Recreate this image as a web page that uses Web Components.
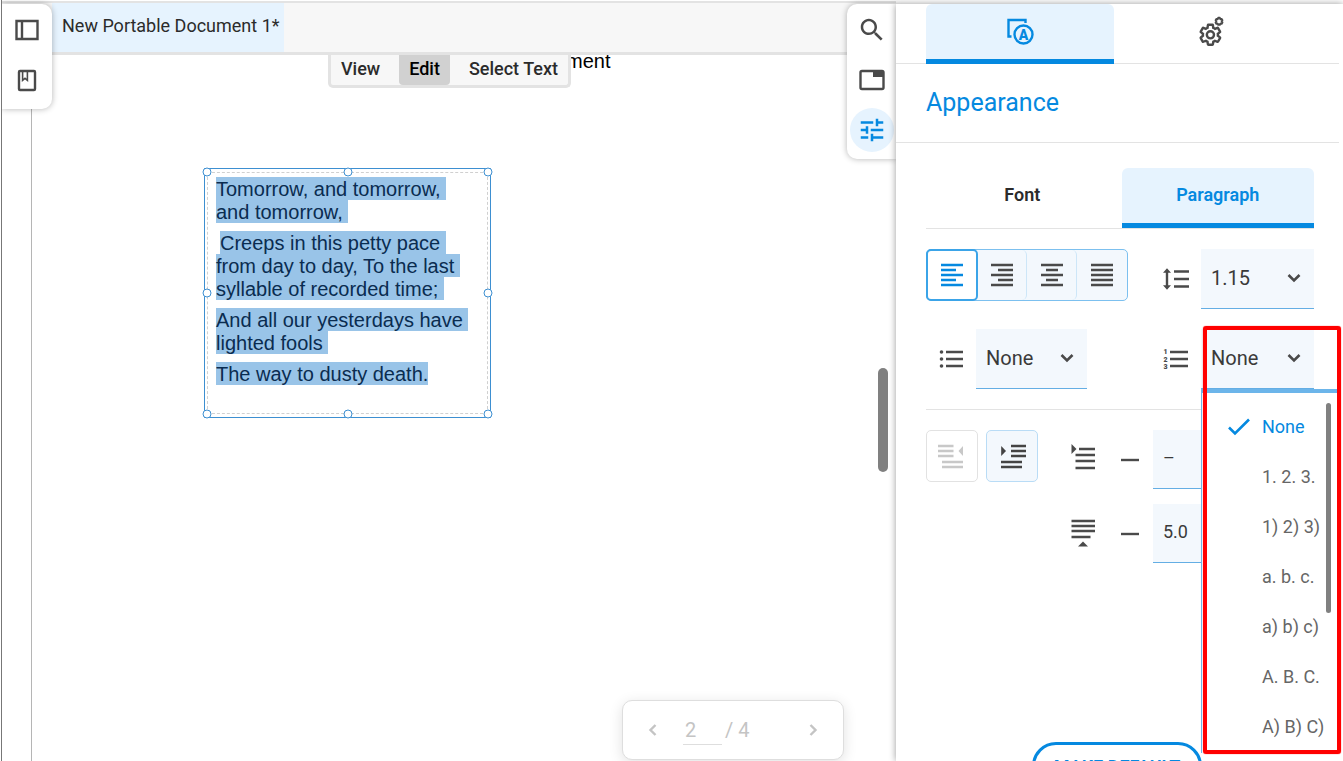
<!DOCTYPE html>
<html lang="en">
<head>
<meta charset="utf-8">
<title>New Portable Document 1*</title>
<style>
    :root {
        --accent: #0589e0;
        --accent-soft: #e6f3fe;
        --field: #f3f8fd;
        --field-line: #64aee4;
        --line: #e3e3e3;
        --ink: #4a4a4a;
    }

    body {
        margin: 0;
        font-family: Roboto, "Liberation Sans", sans-serif;
        font-size: 18px;
        color: #2b2b2b;
        background: #fff;
    }
</style>
</head>
<body>
<pdf-app></pdf-app>

<script>
// Outline shared by the big and the small gear
const GEAR = 'M19.43 12.98c.04-.32.07-.64.07-.98 0-.34-.03-.66-.07-.98l2.11-1.65c.19-.15.24-.42.12-.64l-2-3.46c-.09-.16-.26-.25-.44-.25-.06 0-.12.01-.17.03l-2.49 1c-.52-.4-1.08-.73-1.69-.98l-.38-2.65C14.46 2.18 14.25 2 14 2h-4c-.25 0-.46.18-.49.42l-.38 2.65c-.61.25-1.17.59-1.69.98l-2.49-1c-.06-.02-.12-.03-.18-.03-.17 0-.34.09-.43.25l-2 3.46c-.13.22-.07.49.12.64l2.11 1.65c-.04.32-.07.65-.07.98 0 .33.03.66.07.98l-2.11 1.65c-.19.15-.24.42-.12.64l2 3.46c.09.16.26.25.44.25.06 0 .12-.01.17-.03l2.49-1c.52.4 1.08.73 1.69.98l.38 2.65c.03.24.24.42.49.42h4c.25 0 .46-.18.49-.42l.38-2.65c.61-.25 1.17-.59 1.69-.98l2.49 1c.06.02.12.03.18.03.17 0 .34-.09.43-.25l2-3.46c.12-.22.07-.49-.12-.64l-2.11-1.65z';

// Every icon is drawn on a 28x28 grid
const ICONS = {
    sidebar: '<path d="M3.5 5h21v18h-21zM9 5v18"/>',
    bookmark: '<rect x="6" y="5" width="16" height="19" rx="1"/><path stroke-width="1.6" d="M9.6 5v9.4l2.4-2 2.4 2V5"/>',
    search: '<path class="f" transform="translate(-1 -1) scale(1.25)" d="M15.5 14h-.79l-.28-.27C15.41 12.59 16 11.11 16 9.5 16 5.91 13.09 3 9.5 3S3 5.91 3 9.5 5.91 16 9.5 16c1.61 0 3.09-.59 4.23-1.57l.27.28v.79l5 4.99L20.49 19l-4.99-5zm-6 0C7.01 14 5 11.99 5 9.5S7.01 5 9.5 5 14 7.01 14 9.5 11.99 14 9.5 14z"/>',
    pane: '<rect x="2.5" y="5" width="23" height="18" rx="1.5"/><path class="f" d="M15 4h10v7H15z"/>',
    tune: '<path class="f" transform="translate(-1 -1) scale(1.25)" d="M3 17v2h6v-2H3zM3 5v2h10V5H3zm10 16v-2h8v-2h-8v-2h-2v6h2zM7 9v2H3v2h4v2h2V9H7zm14 4v-2H11v2h10zm-6-4h2V7h4V5h-4V3h-2v6z"/>',
    appearance: '<path d="M19.5 5V2h-17v16.500H5.500"/><circle cx="17.500" cy="16.500" r="9"/><text x="17.500" y="21.500" font-size="14">A</text>',
    gears: `<g transform="translate(.4 4.800)"><path d="${GEAR}"/><circle cx="12" cy="12" r="3.600"/></g><g transform="translate(16.700 -1) scale(.36)"><path stroke-width="5" d="${GEAR}"/></g>`,
    left: '<path d="M3 4h22M3 9h15M3 14h22M3 19h15M3 24h22"/>',
    right: '<path d="M3 4h22M10 9h15M3 14h22M10 19h15M3 24h22"/>',
    center: '<path d="M3 4h22M8 9h12M3 14h22M8 19h12M3 24h22"/>',
    justify: '<path d="M3 4h22M3 9h22M3 14h22M3 19h22M3 24h22"/>',
    leading: '<path d="M12 6.500h15M12 14h15M12 21.500h15M5 6v16"/><path class="f" d="M5 3.200l4 4.600H1zM5 24.800l4-4.600H1z"/>',
    bullets: '<path d="M9 7h17M9 14h17M9 21h17"/><circle class="f" cx="4.500" cy="7" r="1.800"/><circle class="f" cx="4.500" cy="14" r="1.800"/><circle class="f" cx="4.500" cy="21" r="1.800"/>',
    numbers: '<path d="M8 7h18M8 14h18M8 21h18"/><text x="3.500" y="9" font-size="7">1</text><text x="3.500" y="16.500" font-size="7">2</text><text x="3.500" y="24" font-size="7">3</text>',
    outdent: '<path d="M0 4h15.500M0 9h15.500M0 14h15.500M4 20h21M4 25h21"/><path class="f" d="M20.500 9l4.500-5v10z"/>',
    indent: '<path d="M13 4h15M13 9h15M13 14h15M3 20h21M3 25h21"/><path class="f" d="M8 9L3.200 4v10z"/>',
    firstline: '<path d="M10 3h16M6.500 9H26M6.500 15H26M6.500 22H26"/><path class="f" d="M7.500 3L2.500-2V8z"/>',
    after: '<path d="M2.500 1H26M2.500 6H26M2.500 11H26M2.500 17h19"/><path class="f" d="M14 21.500l5 5H9z"/>',
    minus: '<path d="M5 14h18"/>',
    plus: '<path d="M5 14h18M14 5v18"/>',
    down: '<path stroke-width="2.600" d="M8.500 11l5.500 5.500 5.500-5.500"/>',
    prev: '<path stroke-width="2.400" d="M16.500 9l-5 5 5 5"/>',
    next: '<path stroke-width="2.400" d="M11.500 9l5 5-5 5"/>',
    check: '<path stroke-width="2.600" d="M4 15.500l6 6L24 7.500"/>'
};

class UiIcon extends HTMLElement {
    constructor() {
        super();
        this.attachShadow({ mode: 'open' });
    }

    connectedCallback() {
        this.shadowRoot.innerHTML = `
            <style>
                :host { display: block; flex: none; width: 28px; height: 28px; pointer-events: none; }
                svg { display: block; overflow: visible; fill: none; stroke: currentColor; stroke-width: 2.4; }
                .f, text { fill: currentColor; stroke: none; }
                text { font-family: Roboto, sans-serif; font-weight: 900; text-anchor: middle; }
            </style>
            <svg width="28" height="28" viewBox="0 0 28 28" aria-hidden="true">${ICONS[this.getAttribute('name')]}</svg>
        `;
    }
}

// Floating strip of tool buttons at the edge of the workspace
class ToolRail extends HTMLElement {
    constructor() {
        super();
        this.attachShadow({ mode: 'open' });
    }

    connectedCallback() {
        const tools = this.getAttribute('tools').split(' ');
        const active = this.getAttribute('active');
        this.shadowRoot.innerHTML = `
            <style>
                :host {
                    display: flex; flex-direction: column; align-items: center;
                    box-sizing: border-box; width: 50px; padding: 1px 0 4px;
                    background: #fff; color: var(--ink);
                    box-shadow: 0 0 6px rgba(0, 0, 0, .3);
                }
                button {
                    display: grid; place-items: center; width: 44px; height: 44px; margin: 3px 0;
                    padding: 0; border: 0; border-radius: 50%; background: none; color: inherit;
                }
                .active { background: var(--accent-soft); color: var(--accent); }
            </style>
            ${tools.map(t => `<button class="${t === active ? 'active' : ''}" aria-label="${t}"><ui-icon name="${t}"></ui-icon></button>`).join('')}
        `;
    }
}

class DocumentTabs extends HTMLElement {
    constructor() {
        super();
        this.attachShadow({ mode: 'open' });
        this.shadowRoot.innerHTML = `
            <style>
                :host {
                    display: flex; height: 49px; padding-left: 50px; background: #f7f7f7;
                    border-top: 2px solid var(--line); border-bottom: 3px solid var(--line);
                }
                button {
                    border: 0; padding: 0 4px 4px 10px; background: var(--accent-soft);
                    font: inherit; color: inherit;
                }
            </style>
            <button><slot></slot></button>
        `;
    }
}

class ModeSwitch extends HTMLElement {
    constructor() {
        super();
        this.attachShadow({ mode: 'open' });
        this.shadowRoot.innerHTML = `
            <style>
                :host {
                    display: flex; gap: 9px; background: #f7f7f7;
                    border: 3px solid var(--line); border-top: 0; border-radius: 0 0 5px 5px;
                }
                button {
                    height: 30px; border: 0; padding: 0 10px 4px; border-radius: 0 0 4px 4px;
                    background: none; font: inherit; font-weight: 500; color: inherit;
                }
                .on { background: #d1d1d1; color: #000; }
            </style>
            <button>View</button>
            <button class="on" aria-pressed="true">Edit</button>
            <button>Select Text</button>
        `;
    }
}

// Selected text frame with its eight resize handles
class TextFrame extends HTMLElement {
    constructor() {
        super();
        this.attachShadow({ mode: 'open' });
        const spots = [[0, 0], [50, 0], [100, 0], [0, 50], [100, 50], [0, 100], [50, 100], [100, 100]];
        this.shadowRoot.innerHTML = `
            <style>
                :host { display: block; border: 1px solid #3d8fd1; padding: 3px 2px; }
                .inner {
                    position: relative; padding: 6px 14px 20px 9px;
                    outline: 1px dashed #d0d0d0; outline-offset: -1px;
                }
                .handle {
                    position: absolute; width: 7px; height: 7px; transform: translate(-50%, -50%);
                    border: 1px solid #3d8fd1; border-radius: 50%; background: #fff;
                }
            </style>
            <div class="inner">
                <slot></slot>
                ${spots.map(([x, y]) => `<span class="handle" style="left:${x}%;top:${y}%"></span>`).join('')}
            </div>
        `;
    }
}

class PageCanvas extends HTMLElement {
    constructor() {
        super();
        this.attachShadow({ mode: 'open' });
        this.shadowRoot.innerHTML = `
            <style>
                :host { display: block; position: relative; overflow: hidden; }
                .sheet {
                    height: 100%; margin-left: 29px; border-left: 1px solid #b5b5b5;
                    font-family: "Liberation Sans", Arial, sans-serif; font-size: 20px; line-height: 23px;
                }
                .heading { position: absolute; left: 564px; top: -5px; margin: 0; color: #000; }
                text-frame { position: absolute; left: 202px; top: 113px; width: 281px; }
                text-frame p { margin: 0 0 8px; white-space: pre-wrap; }
                mark { padding: 1px 0 0; background: #99c4e8; color: #0a2c50; }
                mode-switch { position: absolute; left: 326px; top: 0; }
                .thumb {
                    position: absolute; right: 8px; top: 313px; width: 10px; height: 104px;
                    border-radius: 5px; background: #808080;
                }
                page-pager { position: absolute; right: 52px; bottom: 1px; }
            </style>
            <div class="sheet">
                <p class="heading">ment</p>
                <text-frame>
                    <p><mark>Tomorrow, and tomorrow, and tomorrow, </mark></p>
                    <p>&thinsp;<mark>Creeps in this petty pace from day to day, To the last syllable of recorded time; </mark></p>
                    <p><mark>And all our yesterdays have lighted fools </mark></p>
                    <p><mark>The way to dusty death.</mark></p>
                </text-frame>
            </div>
            <mode-switch></mode-switch>
            <div class="thumb"></div>
            <page-pager></page-pager>
        `;
    }
}

class PagePager extends HTMLElement {
    constructor() {
        super();
        this.attachShadow({ mode: 'open' });
        this.shadowRoot.innerHTML = `
            <style>
                :host {
                    display: flex; align-items: center; box-sizing: border-box; width: 222px; height: 60px;
                    padding: 0 16px; border: 1px solid #dedede; border-radius: 10px; background: #fff;
                    box-shadow: 0 3px 14px rgba(0, 0, 0, .12); color: #c4c4c4;
                }
                button { padding: 0; border: 0; background: none; color: inherit; }
                input {
                    box-sizing: border-box; width: 39px; height: 30px; margin: 0 3px 0 16px; padding: 0 2px;
                    border: 0; border-bottom: 1px solid #dedede; background: none;
                    font: inherit; font-size: 20px; color: inherit;
                }
                label { font-size: 20px; flex: 1; }
            </style>
            <button aria-label="Previous page"><ui-icon name="prev"></ui-icon></button>
            <input id="page" value="2">
            <label for="page">/ 4</label>
            <button aria-label="Next page"><ui-icon name="next"></ui-icon></button>
        `;
    }
}

// Icon plus drop-down; the slot takes an opened list
class ChoiceField extends HTMLElement {
    constructor() {
        super();
        this.attachShadow({ mode: 'open' });
    }

    connectedCallback() {
        this.shadowRoot.innerHTML = `
            <style>
                :host { display: flex; align-items: center; gap: 11px; color: var(--ink); }
                .box { position: relative; width: var(--box-width, 113px); }
                select {
                    appearance: none; box-sizing: border-box; display: block; width: 100%; height: 60px;
                    padding: 0 10px 2px; border: 0; border-bottom: 1px solid var(--field-line);
                    border-radius: 0; background: var(--field);
                    font: inherit; font-size: 20px; color: #3a3a3a;
                }
                .arrow { position: absolute; right: 6px; top: 15px; }
            </style>
            <ui-icon name="${this.getAttribute('icon')}"></ui-icon>
            <div class="box">
                <select aria-label="${this.getAttribute('label')}"><option>${this.getAttribute('value')}</option></select>
                <ui-icon class="arrow" name="down"></ui-icon>
                <slot></slot>
            </div>
        `;
    }
}

class ChoiceMenu extends HTMLElement {
    constructor() {
        super();
        this.attachShadow({ mode: 'open' });
        const items = ['None', '1. 2. 3.', '1) 2) 3)', 'a. b. c.', 'a) b) c)', 'A. B. C.', 'A) B) C)'];
        this.shadowRoot.innerHTML = `
            <style>
                :host { display: block; position: absolute; z-index: 2; left: 0; top: 60px; width: 137px; }
                .list {
                    box-sizing: border-box; height: 364px; padding-top: 8px; overflow: hidden; background: #fff;
                    border: 1px solid #6cb5ea; border-top-width: 4px; border-bottom: 0;
                }
                button {
                    display: grid; grid-template-columns: 28px auto; gap: 9px; align-items: center; justify-content: start;
                    width: 100%; height: 50px; padding: 0 0 0 23px; border: 0; background: none;
                    font: inherit; color: #666; text-align: left; white-space: nowrap;
                }
                button span { grid-column: 2; }
                .on { color: var(--accent); }
                .thumb {
                    position: absolute; right: 7px; top: 14px; width: 5px; height: 210px;
                    border-radius: 3px; background: #808080;
                }
                /* red frame round the field and its list */
                .frame {
                    position: absolute; inset: -63px -3px -1px 2px;
                    border: 4px solid #f00; border-radius: 3px; box-shadow: 0 0 1px #f00; pointer-events: none;
                }
            </style>
            <div class="list" role="listbox">
                ${items.map((t, i) => `<button role="option" class="${i ? '' : 'on'}">${i ? '' : '<ui-icon name="check"></ui-icon>'}<span>${t}</span></button>`).join('')}
            </div>
            <div class="thumb"></div>
            <div class="frame"></div>
        `;
    }
}

class AlignGroup extends HTMLElement {
    constructor() {
        super();
        this.attachShadow({ mode: 'open' });
        this.shadowRoot.innerHTML = `
            <style>
                :host {
                    display: flex; align-self: flex-start; box-sizing: border-box; width: 202px; height: 52px;
                    border: 1px solid #7cc0ef; border-radius: 5px; background: var(--field); color: var(--ink);
                }
                button {
                    display: grid; place-items: center; box-sizing: border-box; width: 50px; padding: 0;
                    border: 0; border-right: 1px solid #cde6f8; border-radius: 0 5px 5px 0;
                    background: none; color: inherit;
                }
                button:last-child { border: 0; }
                .on {
                    width: 52px; margin: -1px; border: 2px solid #3ba4e8; border-radius: 5px;
                    background: #fff; color: var(--accent);
                }
            </style>
            <button class="on" aria-label="Align left"><ui-icon name="left"></ui-icon></button>
            <button aria-label="Align right"><ui-icon name="right"></ui-icon></button>
            <button aria-label="Align center"><ui-icon name="center"></ui-icon></button>
            <button aria-label="Justify"><ui-icon name="justify"></ui-icon></button>
        `;
    }
}

class NumberStepper extends HTMLElement {
    constructor() {
        super();
        this.attachShadow({ mode: 'open' });
    }

    connectedCallback() {
        this.shadowRoot.innerHTML = `
            <style>
                :host { display: flex; align-items: center; width: 245px; color: var(--ink); }
                button { padding: 0; border: 0; background: none; color: inherit; }
                .less { margin: 0 9px 0 19px; }
                input {
                    flex: 1; min-width: 0; box-sizing: border-box; height: 59px; padding: 0 10px 4px;
                    border: 0; border-bottom: 1px solid var(--field-line); background: var(--field);
                    font: inherit; color: #3a3a3a;
                }
                .more { margin-left: 9px; }
            </style>
            <ui-icon name="${this.getAttribute('icon')}"></ui-icon>
            <button class="less" aria-label="Less"><ui-icon name="minus"></ui-icon></button>
            <input aria-label="${this.getAttribute('label')}" value="${this.getAttribute('value')}">
            <button class="more" aria-label="More"><ui-icon name="plus"></ui-icon></button>
        `;
    }
}

class PropertyPanel extends HTMLElement {
    constructor() {
        super();
        this.attachShadow({ mode: 'open' });
        this.shadowRoot.innerHTML = `
            <style>
                :host { display: block; background: #fff; }
                .tabs { display: grid; grid-template-columns: 1fr 1fr; border-bottom: 1px solid var(--line); }
                .tabs button {
                    display: grid; place-items: center; box-sizing: border-box; height: 60px; padding: 0;
                    border: 0; border-bottom: 5px solid transparent; border-radius: 6px 6px 0 0;
                    background: none; font: inherit; font-weight: 600; color: var(--ink);
                }
                .tabs .on { background: var(--accent-soft); border-color: var(--accent); color: var(--accent); }
                .top { gap: 4px; padding: 0 33px 0 30px; margin-right: 4px; }
                .top button { margin-bottom: -1px; }
                h2 {
                    margin: 0 4px 0 0; padding: 0 30px; height: 78px; line-height: 78px;
                    border-bottom: 1px solid var(--line);
                    font-size: 25px; font-weight: 400; color: var(--accent);
                }
                .body { display: flex; flex-direction: column; gap: 20px; padding: 25px 29px 0 30px; }
                .sub { gap: 3px; }
                .sub button { padding-bottom: 2px; }
                .sub button:not(.on) { color: #2b2b2b; }
                .row { display: flex; justify-content: space-between; align-items: flex-start; }
                .bullets { --box-width: 111px; margin-left: 11px; }
                hr { width: 100%; height: 1px; margin: 0; border: 0; background: var(--line); }
                .indents { display: flex; gap: 8px; }
                .indents button {
                    display: grid; place-items: center; width: 52px; height: 52px; padding: 0;
                    border: 1px solid #b9dcf6; border-radius: 5px; background: var(--field); color: #444;
                }
                .indents button:disabled { border-color: #e2e2e2; background: #fff; color: #c8c8c8; }
                .steps { display: flex; flex-direction: column; gap: 15px; }
                .default {
                    align-self: center; margin: 159px 6px 0 0; width: 170px; height: 48px; padding: 0;
                    border: 3px solid var(--accent); border-radius: 25px; background: #fff;
                    font: inherit; font-weight: 600; color: var(--accent); white-space: nowrap;
                }
            </style>
            <div class="tabs top">
                <button class="on" aria-label="Appearance"><ui-icon name="appearance"></ui-icon></button>
                <button aria-label="Settings"><ui-icon name="gears"></ui-icon></button>
            </div>
            <h2>Appearance</h2>
            <div class="body">
                <div class="tabs sub">
                    <button>Font</button>
                    <button class="on">Paragraph</button>
                </div>
                <div class="row">
                    <align-group></align-group>
                    <choice-field icon="leading" label="Line spacing" value="1.15"></choice-field>
                </div>
                <div class="row">
                    <choice-field class="bullets" icon="bullets" label="Bullets" value="None"></choice-field>
                    <choice-field icon="numbers" label="Numbering" value="None">
                        <choice-menu></choice-menu>
                    </choice-field>
                </div>
                <hr>
                <div class="row">
                    <div class="indents">
                        <button disabled aria-label="Decrease indent"><ui-icon name="outdent"></ui-icon></button>
                        <button aria-label="Increase indent"><ui-icon name="indent"></ui-icon></button>
                    </div>
                    <div class="steps">
                        <number-stepper icon="firstline" label="First line indent" value="–"></number-stepper>
                        <number-stepper icon="after" label="Space after" value="5.0"></number-stepper>
                    </div>
                </div>
                <button class="default">MAKE DEFAULT</button>
            </div>
        `;
    }
}

class PdfApp extends HTMLElement {
    constructor() {
        super();
        this.attachShadow({ mode: 'open' });
        this.shadowRoot.innerHTML = `
            <style>
                :host {
                    display: grid; grid-template: minmax(0, 1fr) / minmax(0, 1fr) 447px; box-sizing: border-box;
                    height: 100vh; overflow: hidden; margin-left: 1px; border-left: 1px solid #777;
                }
                .work {
                    position: relative; display: grid; grid-template-rows: auto minmax(0, 1fr);
                    padding-top: 1px; min-height: 0;
                }
                tool-rail { position: absolute; top: 4px; }
                .start { left: 0; border-radius: 0 10px 10px 0; }
                .end { right: -1px; border-radius: 10px 0 0 10px; }
                property-panel { position: relative; margin-top: 4px; box-shadow: 0 0 7px rgba(0, 0, 0, .4); }
            </style>
            <div class="work">
                <document-tabs>New Portable Document 1*</document-tabs>
                <page-canvas></page-canvas>
                <tool-rail class="start" tools="sidebar bookmark"></tool-rail>
                <tool-rail class="end" tools="search pane tune" active="tune"></tool-rail>
            </div>
            <property-panel></property-panel>
        `;
    }
}

customElements.define('ui-icon', UiIcon);
customElements.define('tool-rail', ToolRail);
customElements.define('document-tabs', DocumentTabs);
customElements.define('mode-switch', ModeSwitch);
customElements.define('text-frame', TextFrame);
customElements.define('page-pager', PagePager);
customElements.define('page-canvas', PageCanvas);
customElements.define('choice-field', ChoiceField);
customElements.define('choice-menu', ChoiceMenu);
customElements.define('align-group', AlignGroup);
customElements.define('number-stepper', NumberStepper);
customElements.define('property-panel', PropertyPanel);
customElements.define('pdf-app', PdfApp);
</script>
</body>
</html>
